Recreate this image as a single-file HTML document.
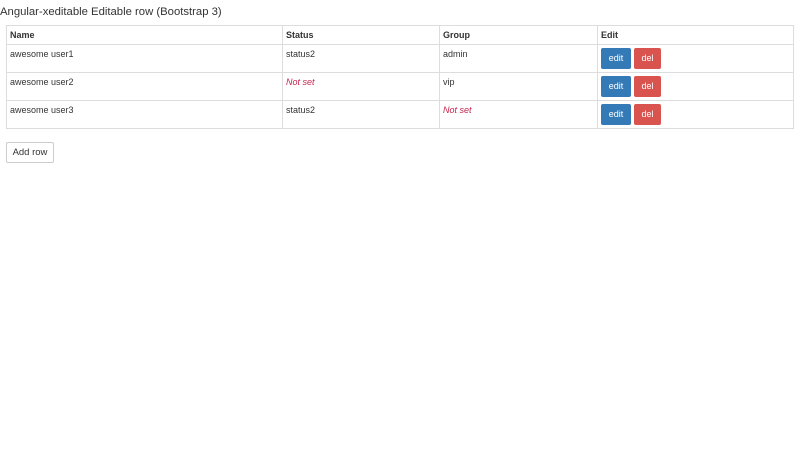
<!DOCTYPE html>
<html><head><style>
body{margin:0;font-family:"Liberation Sans",Arial,sans-serif;color:#333;font-size:9px;background:#fff;}
h4{margin:0;position:absolute;left:0;top:5px;font-weight:normal;font-size:11.3px;line-height:15px;}
table{position:absolute;left:6px;top:25px;width:788px;border-collapse:collapse;}
td,th{border:1px solid #ddd;text-align:left;vertical-align:top;padding:4px 3px;line-height:10px;}
th{font-weight:bold;height:10px;}
td{height:19px;box-sizing:border-box;}
tr.r td{height:28px;padding-bottom:0;}
.ns{color:#c7254e;font-style:italic;}
.b{display:inline-block;color:#fff;border-radius:2px;height:21px;line-height:21px;text-align:center;vertical-align:top;margin-top:-1px;margin-bottom:-6px;}
.e{background:#337ab7;width:30px;}
.d{background:#d9534f;width:27px;margin-left:3px;}
.add{position:absolute;left:6px;top:142px;width:46px;height:19px;border:1px solid #ccc;border-radius:2px;line-height:19px;text-align:center;font-size:9.5px;}
</style></head><body>
<h4>Angular-xeditable Editable row (Bootstrap 3)</h4>
<table>
<tr><th style="width:269px">Name</th><th style="width:150px">Status</th><th style="width:151px">Group</th><th>Edit</th></tr>
<tr class="r"><td>awesome user1</td><td>status2</td><td>admin</td><td><span class="b e">edit</span><span class="b d">del</span></td></tr>
<tr class="r"><td>awesome user2</td><td class="ns">Not set</td><td>vip</td><td><span class="b e">edit</span><span class="b d">del</span></td></tr>
<tr class="r"><td>awesome user3</td><td>status2</td><td class="ns">Not set</td><td><span class="b e">edit</span><span class="b d">del</span></td></tr>
</table>
<div class="add">Add row</div>
</body></html>
